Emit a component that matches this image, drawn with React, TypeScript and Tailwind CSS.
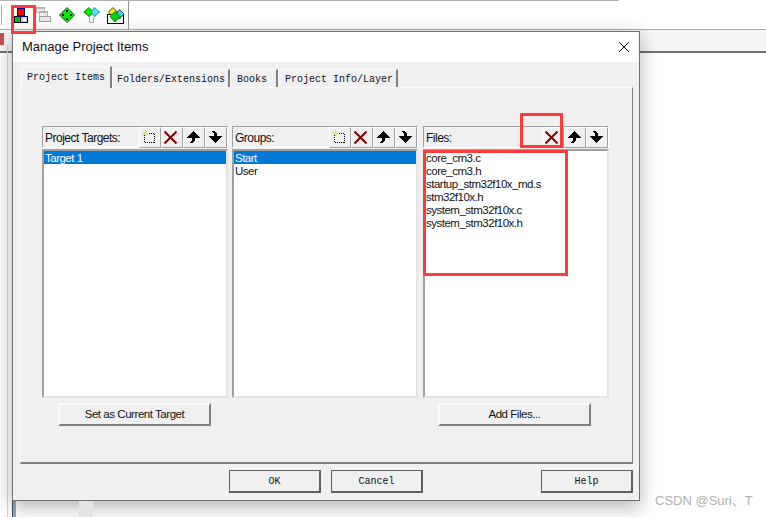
const UI = "font-['Liberation_Sans',Arial,sans-serif]";
const MONO = "font-['Liberation_Mono',monospace]";

function ProjectIcon() {
  return (
    <svg width="14" height="17" viewBox="0 0 14 17" shapeRendering="crispEdges">
      <rect x="3" y="0" width="8" height="9" fill="#000080" />
      <rect x="4" y="2" width="6" height="6" fill="#ff0000" />
      <rect x="0" y="9" width="14" height="7" fill="#000040" />
      <rect x="1" y="10" width="5" height="5" fill="#00c000" />
      <rect x="7" y="10" width="6" height="5" fill="#c8c8c8" />
      <rect x="9" y="11" width="3" height="3" fill="#ffffff" />
    </svg>
  );
}

function StackIcon() {
  return (
    <svg width="15" height="16" viewBox="0 0 15 16" shapeRendering="crispEdges">
      <rect x="0.5" y="0.5" width="8" height="5" fill="#ececec" stroke="#b0b0b0" />
      <rect x="3.5" y="4.5" width="8" height="5" fill="#ececec" stroke="#b0b0b0" />
      <rect x="3.5" y="9.5" width="11" height="5" fill="#ececec" stroke="#a0a0a0" />
      <rect x="1" y="1" width="7" height="1" fill="#b8b8b8" />
      <rect x="4" y="5" width="7" height="1" fill="#b8b8b8" />
    </svg>
  );
}

function GreenDiamondIcon() {
  return (
    <svg width="16" height="16" viewBox="0 0 16 16">
      <path d="M8 0.5L15.5 8L8 15.5L0.5 8Z" fill="#00f000" stroke="#003000" strokeWidth="0.8" />
      <g fill="#000">
        <rect x="7" y="3" width="2" height="2" />
        <rect x="3" y="7" width="2" height="2" />
        <rect x="11" y="7" width="2" height="2" />
        <rect x="7" y="11" width="2" height="2" />
      </g>
    </svg>
  );
}

function FunnelIcon() {
  return (
    <svg width="17" height="16" viewBox="0 0 17 16">
      <path d="M0.5 5L16.5 5L10.5 10.5L10.5 15.5L6.5 15.5L6.5 10.5Z" fill="#f0f6f6" stroke="#909090" strokeWidth="0.8" />
      <path d="M5.5 0.5L11 5L6.5 9.5L1 5Z" fill="#00e800" stroke="#005000" strokeWidth="0.6" />
      <path d="M11.5 0.5L16.5 5L11.5 9.5L8 5Z" fill="#50e0f0" stroke="#006070" strokeWidth="0.6" />
    </svg>
  );
}

function MixedIcon() {
  return (
    <svg width="18" height="17" viewBox="0 0 18 17">
      <rect x="0.5" y="7.5" width="16" height="9" fill="#fff" stroke="#000" />
      <path d="M6 0.5L10.5 5L6 10L1.5 5Z" fill="#f0f000" stroke="#000" strokeWidth="0.7" />
      <path d="M12.5 2.5L17 7L12.5 12L9 7Z" fill="#30d8f0" stroke="#000" strokeWidth="0.7" />
      <path d="M8 4.5L13 9.5L8 15L3 9.5Z" fill="#00d800" stroke="#004000" strokeWidth="0.7" />
    </svg>
  );
}

function NewIcon() {
  return (
    <svg width="15" height="14" viewBox="0 0 15 14" shapeRendering="crispEdges">
      <rect x="2.5" y="3.5" width="10" height="9" fill="none" stroke="#000" strokeDasharray="1 1" />
      <path d="M3 0v6M0 3h6M1 1l4 4M5 1l-4 4" stroke="#f0e040" strokeWidth="1" />
    </svg>
  );
}

function DeleteIcon() {
  return (
    <svg width="13" height="13" viewBox="0 0 13 13" className="-translate-x-px">
      <path d="M0.5 0.5L12.5 12.5M12.5 0.5L0.5 12.5" stroke="#800000" strokeWidth="2" />
    </svg>
  );
}

function ArrowIcon({ down = false }: { down?: boolean }) {
  return (
    <svg width="13" height="12" viewBox="0 0 13 12" shapeRendering="crispEdges" className={down ? "-scale-y-100" : ""}>
      <path d="M6 0h1v1h1v1h1v1h1v1h1v1h1v1h1v1H8v3H7v1H6v1H3v-1h1v-1h1V7H0V6h1V5h1V4h1V3h1V2h1V1h1z" fill="#000" />
    </svg>
  );
}

function ToolButton({ children }: { children: React.ReactNode }) {
  return (
    <div className="w-[22px] h-[21px] flex items-center justify-center pr-[2px] bg-[#f0f0f0] border-l border-t border-white border-r border-r-[#a0a0a0] border-b border-b-[#a0a0a0]">
      {children}
    </div>
  );
}

function ListColumn({ title, items, selected, showNew = true, className = "" }: { title: string; items: string[]; selected?: number; showNew?: boolean; className?: string }) {
  return (
    <div className={`flex flex-col w-[186px] ${className}`}>
      <div className="h-[22px] flex items-center justify-between border border-[#a0a0a0] border-b-white border-r-white bg-[#f0f0f0]">
        <span className="pl-0.5 pt-px text-[12px] tracking-[-0.5px] text-[#111]">{title}</span>
        <div className="flex">
          {showNew && <ToolButton><NewIcon /></ToolButton>}
          <ToolButton><DeleteIcon /></ToolButton>
          <ToolButton><ArrowIcon /></ToolButton>
          <ToolButton><ArrowIcon down /></ToolButton>
        </div>
      </div>
      <div className="mt-px h-[249px] bg-white border-2 border-t-[#a0a0a0] border-l-[#a0a0a0] border-r-[#e4e4e4] border-b-[#e4e4e4] text-[11.5px] leading-[13px] tracking-[-0.5px] text-[#111]">
        {items.map((item, i) => (
          <div key={item} className={i === selected ? "pl-px pt-px h-[13px] bg-[#0078d7] text-white" : "pl-px pt-px h-[13px]"}>
            {item}
          </div>
        ))}
      </div>
    </div>
  );
}

function DialogButton({ label, width, main = false, mono = false }: { label: string; width: string; main?: boolean; mono?: boolean }) {
  return (
    <button
      className={`${width} h-[23px] flex items-center justify-center bg-[#f0f0f0] text-[#111] ${mono ? `${MONO} text-[10px]` : "text-[11.5px] tracking-[-0.45px]"} ${
        main
          ? "border border-[#606060] border-b-2 border-r-2"
          : "border-2 border-l-[#fafafa] border-t-[#fafafa] border-r-[#808080] border-b-[#808080]"
      }`}
    >
      {label}
    </button>
  );
}

const TABS = [
  { label: "Project Items", style: "h-[22px] pt-[3px] pl-[5px] pr-[5px] bg-[#f0f0f0] -mb-px" },
  { label: "Folders/Extensions", style: "h-[18px] pt-[2px] pl-[4px] pr-[3px]" },
  { label: "Books", style: "h-[18px] pt-[2px] pl-[6px] pr-[9px]" },
  { label: "Project Info/Layer", style: "h-[18px] pt-[2px] pl-[6px] pr-[3px]" },
];

export default function App() {
  return (
    <div className={`relative w-[766px] h-[517px] overflow-hidden bg-white ${UI}`}>
      {/* ide behind the dialog */}
      <div className="h-[29px] w-[619px] border-t border-[#b0b0b0] flex items-center">
        <div className="h-[28px] w-[129px] flex items-center border-r border-[#909090]">
          <div className="ml-[1px] h-[20px] w-px bg-[#b0b0b0]" />
          <div className="ml-[12px] flex items-center">
            <ProjectIcon />
            <div className="ml-[8px]"><StackIcon /></div>
            <div className="ml-[8px]"><GreenDiamondIcon /></div>
            <div className="ml-[8px]"><FunnelIcon /></div>
            <div className="ml-[7px]"><MixedIcon /></div>
          </div>
        </div>
      </div>
      <div className="h-[24px] bg-[#f5f5f5] border-t border-[#b0b0b0] border-b-2 border-b-[#707078]" />

      <div className="absolute left-0 top-[33px] w-[4px] h-[12px] bg-[#c75050]" />
      <div className="absolute left-[7px] top-[45px] w-px h-[472px] bg-[#d8d8d8]" />
      <div className="absolute left-[12px] top-[500px] w-[4px] h-[17px] bg-[#8fa6d0] border-l border-[#505050]" />

      {/* dialog */}
      <div className="absolute left-[12px] top-[31px] w-[628px] h-[470px] flex flex-col bg-[#f0f0f0] border border-[#707070] shadow-[0_6px_18px_rgba(0,0,0,0.3)]">
        <div className="h-[30px] shrink-0 bg-white flex items-center justify-between pl-[9px] pr-[9px]">
          <span className="text-[13px] text-[#111]">Manage Project Items</span>
          <svg width="12" height="12" viewBox="0 0 12 12"><path d="M1 1L11 11M11 1L1 11" stroke="#111" strokeWidth="1" /></svg>
        </div>

        <div className="flex h-[25px] pl-[8px] items-end relative z-10">
          {TABS.map((tab) => (
            <div
              key={tab.label}
              className={`${MONO} text-[10px] text-[#111] border-t border-l border-[#fafafa] border-r-2 border-r-[#808080] ${tab.style}`}
            >
              {tab.label}
            </div>
          ))}
        </div>

        <div className="ml-[7px] w-[613px] h-[377px] border border-[#fafafa] border-r-[#808080] border-b-[#808080] border-b-2 pt-[38px] pl-[21px]">
          <div className="flex">
            <ListColumn title="Project Targets:" items={["Target 1"]} selected={0} />
            <ListColumn title="Groups:" items={["Start", "User"]} selected={0} className="ml-[4px]" />
            <ListColumn title="Files:" showNew={false} className="ml-[5px]" items={["core_cm3.c", "core_cm3.h", "startup_stm32f10x_md.s", "stm32f10x.h", "system_stm32f10x.c", "system_stm32f10x.h"]} />
          </div>
          <div className="flex mt-[5px]">
            <div className="ml-[16px]"><DialogButton label="Set as Current Target" width="w-[153px]" /></div>
            <div className="ml-[227px]"><DialogButton label="Add Files..." width="w-[153px]" /></div>
          </div>
        </div>

        <div className="flex mt-[6px] pl-[216px]">
          <DialogButton label="OK" width="w-[92px]" main mono />
          <div className="ml-[10px]"><DialogButton label="Cancel" width="w-[92px]" main mono /></div>
          <div className="ml-[118px]"><DialogButton label="Help" width="w-[92px]" main mono /></div>
        </div>
      </div>

      <div className="absolute left-[79px] top-[501px] w-[14px] h-[16px] bg-[repeating-conic-gradient(#dcdcdc_0_25%,#ececec_0_50%)] bg-[size:2px_2px]" />

      {/* red annotations */}
      <div className="absolute left-[11px] top-[5px] w-[25px] h-[29px] border-[3px] border-[#ff3a3a]" />
      <div className="absolute left-[520px] top-[113px] w-[43px] h-[35px] border-[3px] border-[#ff3a3a]" />
      <div className="absolute left-[423px] top-[150px] w-[145px] h-[126px] border-[3px] border-[#ff3a3a]" />

      <div className="absolute left-[655px] top-[491px] text-[13px] text-[#b0b0b0] font-['Liberation_Sans','Noto_Sans_CJK_SC',sans-serif]">CSDN @Suri、T</div>
    </div>
  );
}
